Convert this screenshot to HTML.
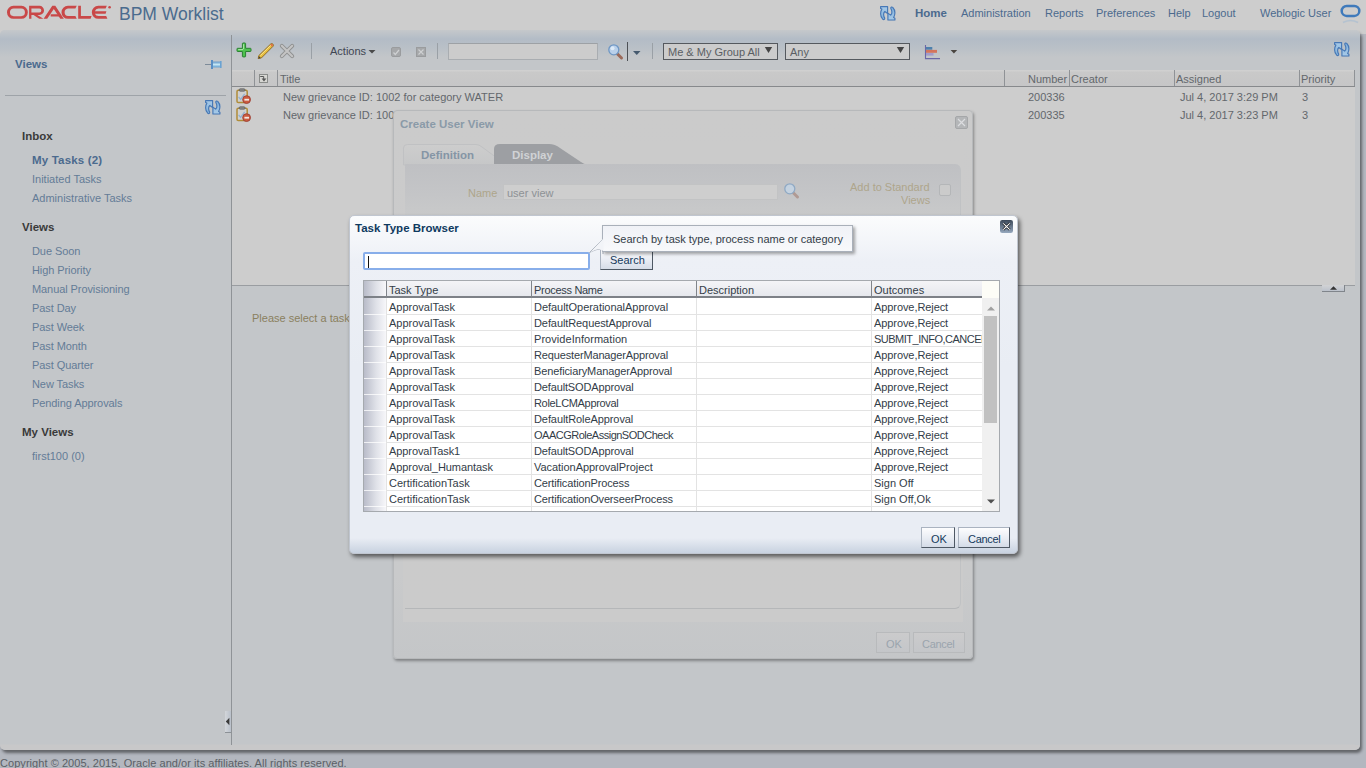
<!DOCTYPE html>
<html><head><meta charset="utf-8">
<style>
*{box-sizing:border-box;margin:0;padding:0}
html,body{width:1366px;height:768px;overflow:hidden}
body{position:relative;font-family:"Liberation Sans",sans-serif;font-size:11px;background:#b3b7bf;color:#444}
.a{position:absolute;white-space:nowrap;line-height:13px}
svg{position:absolute;overflow:visible}
</style></head><body>
<div class="a" style="left:0px;top:0px;width:1366px;height:34px;background:#cdcdcd"></div>
<svg style="left:0;top:0" width="120" height="30" viewBox="0 0 120 30"><g fill="#c94848">
<path fill-rule="evenodd" d="M13.45 5.85H21.35A6.475 6.475 0 0 1 21.35 18.8H13.45A6.475 6.475 0 0 1 13.45 5.85ZM13.8 8.5A3.85 3.85 0 0 0 13.8 16.2H21.1A3.85 3.85 0 0 0 21.1 8.5Z"/>
<path d="M29.1 5.85H39.5A4.525 4.525 0 0 1 39.5 14.9H31.4V18.8H29.1ZM31.4 8.4V12.5H39.3A2.05 2.05 0 0 0 39.3 8.4Z"/>
<path d="M33.6 14.9H37.4L43.4 18.8H39.2Z"/>
<path d="M43.6 18.8L52.3 5.85H55.3L63.8 18.8H60.3L53.8 9.1L47.2 18.8Z"/>
<path d="M50.7 14.2H58.2L59.8 16.6H50.7Z"/>
<path d="M76.7 5.85H67.95A6.475 6.475 0 0 0 67.95 18.8H76.7L75.4 16.1H68A3.825 3.825 0 0 1 68 8.5H75.4Z"/>
<path d="M78.2 5.85H80.9V16.1H91.6L90.6 18.8H78.2Z"/>
<path d="M106.8 5.85H98.3A6.475 6.475 0 0 0 98.3 18.8H107.4L106.2 16.1H98.4A3.825 3.825 0 0 1 94.9 13.8H105.6L106.4 11.2H94.9A3.825 3.825 0 0 1 98.4 8.5H105.6Z"/>
<circle cx="109.6" cy="7.2" r="1.3"/>
</g></svg>
<div class="a" style="left:119px;top:8px;font-size:17.5px;color:#4a6b8e;">BPM Worklist</div>
<svg style="left:880px;top:6px" width="17" height="17" viewBox="0 0 17 17">
<defs><linearGradient id="rg880" x1="0" y1="0" x2="0" y2="1"><stop offset="0" stop-color="#a9cbe8"/><stop offset="1" stop-color="#7fb0db"/></linearGradient></defs>
<g transform="translate(0.3 0.3)" fill="#7d8a96" opacity=".35"><path d="M0.6 0.6H7.6V7.5L4.8 5.5Q3.5 6.7 3.6 8.6Q3.7 10.6 4.7 12.1Q4.9 13.2 4.1 13.5Q3.3 13.8 2.7 13.1Q0.6 11 0.6 7.8Q0.6 5 1.9 3.1L0.6 2.4Z"/><path d="M0.6 0.6H7.6V7.5L4.8 5.5Q3.5 6.7 3.6 8.6Q3.7 10.6 4.7 12.1Q4.9 13.2 4.1 13.5Q3.3 13.8 2.7 13.1Q0.6 11 0.6 7.8Q0.6 5 1.9 3.1L0.6 2.4Z" transform="rotate(180 7.75 7.3)"/></g>
<g fill="url(#rg880)" stroke="#4778b6" stroke-width="1.15" stroke-linejoin="round"><path d="M0.6 0.6H7.6V7.5L4.8 5.5Q3.5 6.7 3.6 8.6Q3.7 10.6 4.7 12.1Q4.9 13.2 4.1 13.5Q3.3 13.8 2.7 13.1Q0.6 11 0.6 7.8Q0.6 5 1.9 3.1L0.6 2.4Z"/><path d="M0.6 0.6H7.6V7.5L4.8 5.5Q3.5 6.7 3.6 8.6Q3.7 10.6 4.7 12.1Q4.9 13.2 4.1 13.5Q3.3 13.8 2.7 13.1Q0.6 11 0.6 7.8Q0.6 5 1.9 3.1L0.6 2.4Z" transform="rotate(180 7.75 7.3)"/></g>
</svg>
<div class="a" style="left:915px;top:7px;font-size:11.5px;color:#4b6a8e;font-weight:bold;">Home</div>
<div class="a" style="left:961px;top:7px;font-size:11px;color:#4b6a8e;">Administration</div>
<div class="a" style="left:1045px;top:7px;font-size:11px;color:#4b6a8e;">Reports</div>
<div class="a" style="left:1096px;top:7px;font-size:11px;color:#4b6a8e;">Preferences</div>
<div class="a" style="left:1168px;top:7px;font-size:11px;color:#4b6a8e;">Help</div>
<div class="a" style="left:1202px;top:7px;font-size:11px;color:#4b6a8e;">Logout</div>
<div class="a" style="left:1260px;top:7px;font-size:11px;color:#4b6a8e;">Weblogic User</div>
<svg style="left:1338px;top:3px" width="26" height="22" viewBox="0 0 26 22">
<rect x="3.7" y="2.9" width="17.6" height="10" rx="5" fill="none" stroke="#3f7abb" stroke-width="2.5"/>
<path d="M5 19.5Q12.5 15.5 20 19.5" fill="none" stroke="#a9bdd2" stroke-width="1.5" opacity=".7"/>
</svg>
<div class="a" style="left:0px;top:30px;width:1360px;height:720px;background:linear-gradient(#c3c6c9 714px,#c8c8c9 715px);border-radius:5px;box-shadow:2px 3px 3px rgba(0,0,0,.45)"></div>
<div class="a" style="left:0px;top:30px;width:1360px;height:32px;border-radius:5px 5px 0 0;background:linear-gradient(#c5c8cb,#b3bcc6 28%,#b9c0c7 55%,#c3c6c9 85%)"></div>
<div class="a" style="left:15px;top:58px;font-size:11.5px;color:#4b6a8e;font-weight:bold;">Views</div>
<svg style="left:204px;top:58px" width="20" height="14" viewBox="0 0 20 14">
<defs><linearGradient id="pg" x1="0" y1="0" x2="0" y2="1"><stop offset="0" stop-color="#5d93c6"/><stop offset=".5" stop-color="#c4e6f4"/><stop offset="1" stop-color="#5c9bcf"/></linearGradient></defs>
<line x1="1" y1="6.5" x2="7.5" y2="6.5" stroke="#7d8b99" stroke-width="1"/>
<rect x="7" y="2" width="2" height="9" fill="#5a8fc4"/>
<rect x="9" y="3.6" width="7.5" height="5.8" fill="url(#pg)"/>
<rect x="16" y="3" width="1.6" height="7" fill="#6aa3d2"/>
</svg>
<div class="a" style="left:5px;top:95px;width:221px;height:1px;background:#9ea3a8"></div>
<svg style="left:205px;top:100px" width="17" height="17" viewBox="0 0 17 17">
<defs><linearGradient id="rg205" x1="0" y1="0" x2="0" y2="1"><stop offset="0" stop-color="#a9cbe8"/><stop offset="1" stop-color="#7fb0db"/></linearGradient></defs>
<g transform="translate(0.3 0.3)" fill="#7d8a96" opacity=".35"><path d="M0.6 0.6H7.6V7.5L4.8 5.5Q3.5 6.7 3.6 8.6Q3.7 10.6 4.7 12.1Q4.9 13.2 4.1 13.5Q3.3 13.8 2.7 13.1Q0.6 11 0.6 7.8Q0.6 5 1.9 3.1L0.6 2.4Z"/><path d="M0.6 0.6H7.6V7.5L4.8 5.5Q3.5 6.7 3.6 8.6Q3.7 10.6 4.7 12.1Q4.9 13.2 4.1 13.5Q3.3 13.8 2.7 13.1Q0.6 11 0.6 7.8Q0.6 5 1.9 3.1L0.6 2.4Z" transform="rotate(180 7.75 7.3)"/></g>
<g fill="url(#rg205)" stroke="#4778b6" stroke-width="1.15" stroke-linejoin="round"><path d="M0.6 0.6H7.6V7.5L4.8 5.5Q3.5 6.7 3.6 8.6Q3.7 10.6 4.7 12.1Q4.9 13.2 4.1 13.5Q3.3 13.8 2.7 13.1Q0.6 11 0.6 7.8Q0.6 5 1.9 3.1L0.6 2.4Z"/><path d="M0.6 0.6H7.6V7.5L4.8 5.5Q3.5 6.7 3.6 8.6Q3.7 10.6 4.7 12.1Q4.9 13.2 4.1 13.5Q3.3 13.8 2.7 13.1Q0.6 11 0.6 7.8Q0.6 5 1.9 3.1L0.6 2.4Z" transform="rotate(180 7.75 7.3)"/></g>
</svg>
<div class="a" style="left:22px;top:130px;font-size:11.5px;color:#3a3a3a;font-weight:bold;">Inbox</div>
<div class="a" style="left:32px;top:154px;font-size:11.5px;color:#4b6a8e;font-weight:bold;letter-spacing:0.18px;">My Tasks (2)</div>
<div class="a" style="left:32px;top:173px;font-size:11px;color:#647c97;">Initiated Tasks</div>
<div class="a" style="left:32px;top:192px;font-size:11px;color:#647c97;">Administrative Tasks</div>
<div class="a" style="left:22px;top:221px;font-size:11.5px;color:#3a3a3a;font-weight:bold;">Views</div>
<div class="a" style="left:32px;top:245px;font-size:11px;color:#647c97;letter-spacing:-0.08px;">Due Soon</div>
<div class="a" style="left:32px;top:264px;font-size:11px;color:#647c97;letter-spacing:-0.08px;">High Priority</div>
<div class="a" style="left:32px;top:283px;font-size:11px;color:#647c97;letter-spacing:-0.08px;">Manual Provisioning</div>
<div class="a" style="left:32px;top:302px;font-size:11px;color:#647c97;letter-spacing:-0.08px;">Past Day</div>
<div class="a" style="left:32px;top:321px;font-size:11px;color:#647c97;letter-spacing:-0.08px;">Past Week</div>
<div class="a" style="left:32px;top:340px;font-size:11px;color:#647c97;letter-spacing:-0.08px;">Past Month</div>
<div class="a" style="left:32px;top:359px;font-size:11px;color:#647c97;letter-spacing:-0.08px;">Past Quarter</div>
<div class="a" style="left:32px;top:378px;font-size:11px;color:#647c97;letter-spacing:-0.08px;">New Tasks</div>
<div class="a" style="left:32px;top:397px;font-size:11px;color:#647c97;letter-spacing:-0.08px;">Pending Approvals</div>
<div class="a" style="left:22px;top:426px;font-size:11.5px;color:#3a3a3a;font-weight:bold;">My Views</div>
<div class="a" style="left:32px;top:450px;font-size:11px;color:#647c97;">first100 (0)</div>
<div class="a" style="left:231px;top:35px;width:1px;height:710px;background:#8f9397"></div>
<div class="a" style="left:225px;top:711px;width:6px;height:22px;background:linear-gradient(90deg,#d3d6da,#b9c0ca);border-bottom:1px solid #8c9196"></div>
<svg style="left:225px;top:716px" width="6" height="12"><path d="M0.8 5.5L4.4 1.8V9.2Z" fill="#3a3a3a"/></svg>
<svg style="left:236px;top:42px" width="17" height="17" viewBox="0 0 17 17">
<path d="M6.4 1.6Q6.4 1 7 1H9Q9.6 1 9.6 1.6V6.3H14.4Q15 6.3 15 6.9V8.9Q15 9.5 14.4 9.5H9.6V14.3Q9.6 14.9 9 14.9H7Q6.4 14.9 6.4 14.3V9.5H1.6Q1 9.5 1 8.9V6.9Q1 6.3 1.6 6.3H6.4Z" fill="#4ec24e" stroke="#2c8034" stroke-width="1"/>
<path d="M7.6 2.2V7.2M2.2 7.6H7" stroke="#c8f0c4" stroke-width="1" opacity=".8"/>
</svg>
<svg style="left:257px;top:42px" width="18" height="18" viewBox="0 0 18 18">
<path d="M1.8 13.6L1.2 16.6 4.3 16 16 4.3Q16.9 3.2 15.9 2.1Q14.8 1.1 13.7 2Z" fill="#e8c040" stroke="#8d6a28" stroke-width="1" stroke-linejoin="round"/>
<path d="M13.2 3.1L14.8 4.7L15.6 3.8Q16.4 3 15.6 2.2Q14.8 1.4 14 2.3Z" fill="#e0704a"/>
<path d="M3.3 13.6L13.6 3.3" stroke="#fff3b0" stroke-width=".7"/>
<path d="M1.5 16.4L2.2 14.2 3.7 15.7Z" fill="#404040"/>
</svg>
<svg style="left:279px;top:43px" width="16" height="16" viewBox="0 0 16 16">
<path d="M2.8 2.8L13.2 13.2M13.2 2.8L2.8 13.2" stroke="#8f9090" stroke-width="4" stroke-linecap="round"/>
<path d="M2.8 2.8L13.2 13.2M13.2 2.8L2.8 13.2" stroke="#c4c4c4" stroke-width="2.1" stroke-linecap="round"/>
</svg>
<div class="a" style="left:311px;top:43px;width:1px;height:16px;background:#9aa0a6"></div>
<div class="a" style="left:330px;top:45px;font-size:11px;color:#3f4652;">Actions</div>
<svg style="left:368px;top:49px" width="8" height="6"><path d="M0.5 1H7.5L4 4.5Z" fill="#4a4a4a"/></svg>
<div class="a" style="left:391px;top:47px;width:10px;height:10px;background:#a6a8aa;border:1px solid #9a9c9e;border-radius:2px"></div>
<svg style="left:391px;top:47px" width="10" height="10"><path d="M2.5 5.5L4.3 7.5 8 3" stroke="#cfd1d3" stroke-width="1.2" fill="none"/></svg>
<div class="a" style="left:416px;top:47px;width:10px;height:10px;background:#a6a8aa;border:1px solid #9a9c9e"></div>
<svg style="left:416px;top:47px" width="10" height="10"><path d="M2.5 2.5L7.5 7.5M7.5 2.5L2.5 7.5" stroke="#cfd1d3" stroke-width="1.1"/></svg>
<div class="a" style="left:437px;top:43px;width:1px;height:16px;background:#9aa0a6"></div>
<div class="a" style="left:448px;top:43px;width:150px;height:17px;background:#cccccc;border:1px solid #a9adb1;border-top-color:#9da1a5"></div>
<svg style="left:607px;top:43px" width="18" height="18" viewBox="0 0 18 18">
<path d="M9.5 10L14.5 15" stroke="#9a6a5a" stroke-width="3" stroke-linecap="round"/>
<circle cx="6.8" cy="6.8" r="5" fill="#b9d0ea" stroke="#6f97c4" stroke-width="1.3"/>
<circle cx="5.5" cy="5.3" r="2" fill="#e6f0fa" opacity=".8"/>
</svg>
<div class="a" style="left:627px;top:42px;width:1px;height:19px;background:#4d5156"></div>
<svg style="left:632px;top:50px" width="10" height="6"><path d="M1 1H8.5L4.75 5Z" fill="#465a6e"/></svg>
<div class="a" style="left:652px;top:43px;width:1px;height:16px;background:#9aa0a6"></div>
<div class="a" style="left:663px;top:43px;width:115px;height:17px;background:#cccccc;border:1px solid #55595e"></div>
<div class="a" style="left:668px;top:46px;font-size:11px;color:#5a5e63;">Me &amp; My Group All</div>
<svg style="left:764px;top:46px" width="9" height="8"><path d="M0.8 1H8.2L4.5 7Z" fill="#444"/></svg>
<div class="a" style="left:785px;top:43px;width:125px;height:17px;background:#cccccc;border:1px solid #55595e"></div>
<div class="a" style="left:790px;top:46px;font-size:11px;color:#5a5e63;">Any</div>
<svg style="left:896px;top:46px" width="9" height="8"><path d="M0.8 1H8.2L4.5 7Z" fill="#444"/></svg>
<svg style="left:924px;top:44px" width="18" height="17" viewBox="0 0 18 17">
<rect x="2" y="3" width="6.3" height="2.7" fill="#4d80ad"/>
<rect x="2" y="5.9" width="11" height="2.9" fill="#d4745c"/>
<rect x="2" y="9" width="7.5" height="2.6" fill="#a29ccc"/>
<path d="M1.5 1V14.6H16" stroke="#6a67a6" stroke-width="1.1" fill="none"/>
</svg>
<svg style="left:950px;top:49px" width="8" height="6"><path d="M0.6 1H7.2L3.9 4.6Z" fill="#4a4540"/></svg>
<svg style="left:1334px;top:42px" width="17" height="17" viewBox="0 0 17 17">
<defs><linearGradient id="rg1334" x1="0" y1="0" x2="0" y2="1"><stop offset="0" stop-color="#a9cbe8"/><stop offset="1" stop-color="#7fb0db"/></linearGradient></defs>
<g transform="translate(0.3 0.3)" fill="#7d8a96" opacity=".35"><path d="M0.6 0.6H7.6V7.5L4.8 5.5Q3.5 6.7 3.6 8.6Q3.7 10.6 4.7 12.1Q4.9 13.2 4.1 13.5Q3.3 13.8 2.7 13.1Q0.6 11 0.6 7.8Q0.6 5 1.9 3.1L0.6 2.4Z"/><path d="M0.6 0.6H7.6V7.5L4.8 5.5Q3.5 6.7 3.6 8.6Q3.7 10.6 4.7 12.1Q4.9 13.2 4.1 13.5Q3.3 13.8 2.7 13.1Q0.6 11 0.6 7.8Q0.6 5 1.9 3.1L0.6 2.4Z" transform="rotate(180 7.75 7.3)"/></g>
<g fill="url(#rg1334)" stroke="#4778b6" stroke-width="1.15" stroke-linejoin="round"><path d="M0.6 0.6H7.6V7.5L4.8 5.5Q3.5 6.7 3.6 8.6Q3.7 10.6 4.7 12.1Q4.9 13.2 4.1 13.5Q3.3 13.8 2.7 13.1Q0.6 11 0.6 7.8Q0.6 5 1.9 3.1L0.6 2.4Z"/><path d="M0.6 0.6H7.6V7.5L4.8 5.5Q3.5 6.7 3.6 8.6Q3.7 10.6 4.7 12.1Q4.9 13.2 4.1 13.5Q3.3 13.8 2.7 13.1Q0.6 11 0.6 7.8Q0.6 5 1.9 3.1L0.6 2.4Z" transform="rotate(180 7.75 7.3)"/></g>
</svg>
<div class="a" style="left:232px;top:70px;width:1123px;height:215px;background:#cdcdcd"></div>
<div class="a" style="left:232px;top:70px;width:1123px;height:17px;background:linear-gradient(#d0d0d0 1px,#c9c9c9 2px,#c6c6c7);border-bottom:1px solid #87898c"></div>
<div class="a" style="left:254px;top:70px;width:1px;height:16px;background:#8f9296"></div>
<div class="a" style="left:277px;top:70px;width:1px;height:16px;background:#8f9296"></div>
<div class="a" style="left:1004px;top:70px;width:1px;height:16px;background:#8f9296"></div>
<div class="a" style="left:1069px;top:70px;width:1px;height:16px;background:#8f9296"></div>
<div class="a" style="left:1174px;top:70px;width:1px;height:16px;background:#8f9296"></div>
<div class="a" style="left:1299px;top:70px;width:1px;height:16px;background:#8f9296"></div>
<div class="a" style="left:1354px;top:70px;width:1px;height:16px;background:#8f9296"></div>
<svg style="left:259px;top:74px" width="9" height="9" viewBox="0 0 9 9">
<rect x="0.5" y="0.5" width="8" height="8" fill="#d6d6d2" stroke="#8a8c8a" stroke-width="1"/>
<path d="M1.2 2.5H4.7V5" stroke="#555" stroke-width="1" fill="none"/>
<path d="M2.6 4.6H7.4L5 7.4Z" fill="#555"/>
</svg>
<div class="a" style="left:280px;top:73px;font-size:11px;color:#63676c;">Title</div>
<div class="a" style="left:1028px;top:73px;font-size:11px;color:#63676c;">Number</div>
<div class="a" style="left:1071px;top:73px;font-size:11px;color:#63676c;">Creator</div>
<div class="a" style="left:1176px;top:73px;font-size:11px;color:#63676c;">Assigned</div>
<div class="a" style="left:1301px;top:73px;font-size:11px;color:#63676c;">Priority</div>
<svg style="left:234px;top:88px" width="18" height="18" viewBox="0 0 18 18">
<rect x="3" y="2.2" width="10.2" height="12.3" rx="1.3" fill="#d0d0d0" stroke="#b08c38" stroke-width="1.5"/>
<rect x="5.2" y="0.8" width="5.8" height="2.4" rx="1" fill="#8a8a8a" stroke="#5a5a5a" stroke-width=".7"/>
<path d="M4.6 8.8L6.6 11.4 10.6 5.8" stroke="#8fb2d4" stroke-width="1.2" fill="none"/>
<circle cx="12.6" cy="11.6" r="3.9" fill="#cc5b3f" stroke="#9b3f35" stroke-width=".9"/>
<rect x="10.4" y="10.8" width="4.6" height="1.8" fill="#f2e6e2"/>
</svg>
<svg style="left:234px;top:106px" width="18" height="18" viewBox="0 0 18 18">
<rect x="3" y="2.2" width="10.2" height="12.3" rx="1.3" fill="#d0d0d0" stroke="#b08c38" stroke-width="1.5"/>
<rect x="5.2" y="0.8" width="5.8" height="2.4" rx="1" fill="#8a8a8a" stroke="#5a5a5a" stroke-width=".7"/>
<path d="M4.6 8.8L6.6 11.4 10.6 5.8" stroke="#8fb2d4" stroke-width="1.2" fill="none"/>
<circle cx="12.6" cy="11.6" r="3.9" fill="#cc5b3f" stroke="#9b3f35" stroke-width=".9"/>
<rect x="10.4" y="10.8" width="4.6" height="1.8" fill="#f2e6e2"/>
</svg>
<div class="a" style="left:283px;top:91px;font-size:11px;color:#63676c;">New grievance ID: 1002 for category WATER</div>
<div class="a" style="left:283px;top:109px;font-size:11px;color:#63676c;">New grievance ID: 1002 for category WATER</div>
<div class="a" style="left:1028px;top:91px;font-size:11px;color:#63676c;">200336</div>
<div class="a" style="left:1028px;top:109px;font-size:11px;color:#63676c;">200335</div>
<div class="a" style="left:1180px;top:91px;font-size:11px;color:#63676c;">Jul 4, 2017 3:29 PM</div>
<div class="a" style="left:1180px;top:109px;font-size:11px;color:#63676c;">Jul 4, 2017 3:23 PM</div>
<div class="a" style="left:1302px;top:91px;font-size:11px;color:#63676c;">3</div>
<div class="a" style="left:1302px;top:109px;font-size:11px;color:#63676c;">3</div>
<div class="a" style="left:1355px;top:62px;width:5px;height:683px;background:#c3c6c9"></div>
<div class="a" style="left:232px;top:285px;width:1123px;height:1px;background:#9a9da1"></div>
<div class="a" style="left:1322px;top:285px;width:23px;height:7px;background:linear-gradient(#d2d3d5,#bcc2cc);border-right:1px solid #80858b;border-bottom:1px solid #80858b"></div>
<svg style="left:1329px;top:285px" width="10" height="6"><path d="M1 4.8H8L4.5 1.2Z" fill="#333"/></svg>
<div class="a" style="left:252px;top:312px;font-size:11px;color:#8a805e;">Please select a task</div>
<div class="a" style="left:0px;top:757px;font-size:11px;color:#5b6066;letter-spacing:0.05px;">Copyright © 2005, 2015, Oracle and/or its affiliates. All rights reserved.</div>
<div class="a" style="left:393px;top:110px;width:580px;height:549px;background:linear-gradient(#cbcbcb,#c9cacb 85%,#c4c6c8);border:1px solid #b7b9bb;border-radius:4px;box-shadow:1px 2px 3px rgba(0,0,0,.35)"></div>
<div class="a" style="left:400px;top:118px;font-size:11.5px;color:#8a9aa8;font-weight:bold;">Create User View</div>
<div class="a" style="left:955px;top:116px;width:13px;height:13px;background:#b4b6b8;border:1px solid #a5a7a9;border-radius:2px"></div>
<svg style="left:955px;top:116px" width="13" height="13"><path d="M3 3L10 10M10 3L3 10" stroke="#dcdde0" stroke-width="1.2"/></svg>
<div class="a" style="left:403px;top:141px;width:560px;height:481px;background:#cbcbcb"></div>
<svg style="left:403px;top:142px" width="200" height="24" viewBox="0 0 200 24">
<defs><linearGradient id="tdef" x1="0" y1="0" x2="0" y2="1"><stop offset="0" stop-color="#cdcdcd"/><stop offset="1" stop-color="#c6c7c8"/></linearGradient></defs>
<path d="M0.5 23V6Q0.5 2.5 4.5 2.5H73Q76 2.5 79 5L98 19Q102 22 108 22.5H100V23Z" fill="url(#tdef)" stroke="#c0c1c3" stroke-width="1"/>
<path d="M91 22.5V7Q91 2 97 2H146Q152 2 157 6L178 20Q181 22 184 22.5Z" fill="#9d9fa3"/>
</svg>
<div class="a" style="left:421px;top:149px;font-size:11.5px;color:#8595a5;font-weight:bold;">Definition</div>
<div class="a" style="left:512px;top:149px;font-size:11.5px;color:#d0d2d5;font-weight:bold;">Display</div>
<div class="a" style="left:405px;top:164px;width:556px;height:445px;background:linear-gradient(#bfc0c3,#c4c5c7 30px,#cacbcb 60px,#cbcbcb);border-radius:0 6px 6px 0;border-bottom:1px solid #b5b7b9;border-right:1px solid #c0c2c4"></div>
<div class="a" style="left:468px;top:187px;font-size:11px;color:#aea58b;">Name</div>
<div class="a" style="left:503px;top:184px;width:275px;height:16px;background:#cecece;border:1px solid #c2c3c4"></div>
<div class="a" style="left:507px;top:187px;font-size:11px;color:#8d9195;">user view</div>
<svg style="left:783px;top:182px" width="18" height="18" viewBox="0 0 18 18">
<path d="M9.5 10L14.5 15" stroke="#b09a94" stroke-width="3" stroke-linecap="round"/>
<circle cx="6.8" cy="6.8" r="5" fill="#c4d2e0" stroke="#8fa9c4" stroke-width="1.3"/>
</svg>
<div class="a" style="left:850px;top:181px;font-size:11px;color:#aea58b;">Add to Standard</div>
<div class="a" style="left:901px;top:194px;font-size:11px;color:#aea58b;">Views</div>
<div class="a" style="left:939px;top:184px;width:12px;height:12px;background:#cbcbcb;border:1px solid #b4b6b8;border-radius:2px"></div>
<div class="a" style="left:876px;top:632px;width:34px;height:21px;background:linear-gradient(#cbcbcc,#c4c6c9);border:1px solid #b8babc"></div>
<div class="a" style="left:886px;top:638px;font-size:11px;color:#9aa4ad;">OK</div>
<div class="a" style="left:913px;top:632px;width:52px;height:21px;background:linear-gradient(#cbcbcc,#c4c6c9);border:1px solid #b8babc"></div>
<div class="a" style="left:922px;top:638px;font-size:11px;color:#9aa4ad;letter-spacing:-0.3px;">Cancel</div>
<div class="a" style="left:349px;top:215px;width:669px;height:339px;border-radius:5px;background:linear-gradient(#fbfcfd,#edf0f6 45px,#e9edf4 150px,#e9edf4 322px,#c8d2e0);box-shadow:2px 3px 4px rgba(0,0,0,.55);border:1px solid #c0c6d0"></div>
<div class="a" style="left:355px;top:222px;font-size:11.5px;color:#0f3a5f;font-weight:bold;">Task Type Browser</div>
<svg style="left:1000px;top:220px" width="13" height="13" viewBox="0 0 13 13">
<defs><linearGradient id="cg" x1="0" y1="0" x2="0" y2="1"><stop offset="0" stop-color="#3b4858"/><stop offset="1" stop-color="#96a8be"/></linearGradient></defs>
<rect x="0" y="0" width="13" height="13" rx="2.2" fill="url(#cg)"/>
<path d="M3.3 3.3L9.7 9.7M9.7 3.3L3.3 9.7" stroke="#000" stroke-width="2.4" opacity=".85"/>
<path d="M3.3 3.3L9.7 9.7M9.7 3.3L3.3 9.7" stroke="#fff" stroke-width="1.1"/>
</svg>
<div class="a" style="left:363px;top:252px;width:227px;height:18px;background:#fff;border:2px solid #88aeea;border-radius:2px"></div>
<div class="a" style="left:368px;top:256px;width:1px;height:12px;background:#111"></div>
<div class="a" style="left:600px;top:249px;width:53px;height:21px;background:linear-gradient(#fdfdfe,#e6eaf2 60%,#d6dde8);border:1px solid #aab3c0;border-right-color:#4e5864;border-bottom-color:#4e5864"></div>
<div class="a" style="left:610px;top:254px;font-size:11px;color:#153a5c;">Search</div>
<svg style="left:586px;top:224px" width="22" height="32" viewBox="0 0 22 32">
<path d="M17 4V15L3.5 28.5 9 26 13 25 17 26V30" fill="#f2f4f8" stroke="#a5adb8" stroke-width="1"/>
</svg>
<div class="a" style="left:602px;top:225px;width:251px;height:27px;background:linear-gradient(#f0f2f7,#f8f9fb);border:1px solid #a9b0ba;box-shadow:2px 2px 3px rgba(0,0,0,.35)"></div>
<svg style="left:586px;top:224px" width="22" height="32" viewBox="0 0 22 32"><path d="M17.5 14V26.5H16L13 25 9 26 4 28.5 17 15Z" fill="#f2f4f8"/></svg>
<div class="a" style="left:613px;top:233px;font-size:11px;color:#333d48;">Search by task type, process name or category</div>
<div class="a" style="left:363px;top:280px;width:637px;height:232px;background:#fff;border:1px solid #a5a9ae"></div>
<div class="a" style="left:364px;top:281px;width:618px;height:17px;background:linear-gradient(#f4f4f7,#e6e8ed);border-bottom:2px solid #7d8187"></div>
<div class="a" style="left:364px;top:281px;width:22px;height:230px;background:linear-gradient(90deg,#b9bcc9,#dfe1e8 55%,#f7f7fa)"></div>
<div class="a" style="left:364px;top:281px;width:22px;height:17px;background:linear-gradient(90deg,#b9bcc9,#dfe1e8 55%,#f7f7fa);border-bottom:2px solid #7d8187"></div>
<div class="a" style="left:386px;top:281px;width:1px;height:17px;background:#80848a"></div>
<div class="a" style="left:386px;top:298px;width:1px;height:213px;background:#e3e3e3"></div>
<div class="a" style="left:531px;top:281px;width:1px;height:17px;background:#80848a"></div>
<div class="a" style="left:531px;top:298px;width:1px;height:213px;background:#e3e3e3"></div>
<div class="a" style="left:696px;top:281px;width:1px;height:17px;background:#80848a"></div>
<div class="a" style="left:696px;top:298px;width:1px;height:213px;background:#e3e3e3"></div>
<div class="a" style="left:871px;top:281px;width:1px;height:17px;background:#80848a"></div>
<div class="a" style="left:871px;top:298px;width:1px;height:213px;background:#e3e3e3"></div>
<div class="a" style="left:389px;top:284px;font-size:11px;color:#333d48;">Task Type</div>
<div class="a" style="left:534px;top:284px;font-size:11px;color:#333d48;letter-spacing:-0.3px;">Process Name</div>
<div class="a" style="left:699px;top:284px;font-size:11px;color:#333d48;">Description</div>
<div class="a" style="left:874px;top:284px;font-size:11px;color:#333d48;">Outcomes</div>
<div class="a" style="left:387px;top:314px;width:595px;height:1px;background:#e3e3e3"></div>
<div class="a" style="left:364px;top:314px;width:22px;height:1px;background:rgba(255,255,255,.75)"></div>
<div class="a" style="left:387px;top:330px;width:595px;height:1px;background:#e3e3e3"></div>
<div class="a" style="left:364px;top:330px;width:22px;height:1px;background:rgba(255,255,255,.75)"></div>
<div class="a" style="left:387px;top:346px;width:595px;height:1px;background:#e3e3e3"></div>
<div class="a" style="left:364px;top:346px;width:22px;height:1px;background:rgba(255,255,255,.75)"></div>
<div class="a" style="left:387px;top:362px;width:595px;height:1px;background:#e3e3e3"></div>
<div class="a" style="left:364px;top:362px;width:22px;height:1px;background:rgba(255,255,255,.75)"></div>
<div class="a" style="left:387px;top:378px;width:595px;height:1px;background:#e3e3e3"></div>
<div class="a" style="left:364px;top:378px;width:22px;height:1px;background:rgba(255,255,255,.75)"></div>
<div class="a" style="left:387px;top:394px;width:595px;height:1px;background:#e3e3e3"></div>
<div class="a" style="left:364px;top:394px;width:22px;height:1px;background:rgba(255,255,255,.75)"></div>
<div class="a" style="left:387px;top:410px;width:595px;height:1px;background:#e3e3e3"></div>
<div class="a" style="left:364px;top:410px;width:22px;height:1px;background:rgba(255,255,255,.75)"></div>
<div class="a" style="left:387px;top:426px;width:595px;height:1px;background:#e3e3e3"></div>
<div class="a" style="left:364px;top:426px;width:22px;height:1px;background:rgba(255,255,255,.75)"></div>
<div class="a" style="left:387px;top:442px;width:595px;height:1px;background:#e3e3e3"></div>
<div class="a" style="left:364px;top:442px;width:22px;height:1px;background:rgba(255,255,255,.75)"></div>
<div class="a" style="left:387px;top:458px;width:595px;height:1px;background:#e3e3e3"></div>
<div class="a" style="left:364px;top:458px;width:22px;height:1px;background:rgba(255,255,255,.75)"></div>
<div class="a" style="left:387px;top:474px;width:595px;height:1px;background:#e3e3e3"></div>
<div class="a" style="left:364px;top:474px;width:22px;height:1px;background:rgba(255,255,255,.75)"></div>
<div class="a" style="left:387px;top:490px;width:595px;height:1px;background:#e3e3e3"></div>
<div class="a" style="left:364px;top:490px;width:22px;height:1px;background:rgba(255,255,255,.75)"></div>
<div class="a" style="left:387px;top:506px;width:595px;height:1px;background:#e3e3e3"></div>
<div class="a" style="left:364px;top:506px;width:22px;height:1px;background:rgba(255,255,255,.75)"></div>
<div class="a" style="left:364px;top:298px;width:618px;height:213px;overflow:hidden">
<div class="a" style="left:25px;top:3px;color:#333d48;">ApprovalTask</div>
<div class="a" style="left:170px;top:3px;color:#333d48;letter-spacing:-0.04px;">DefaultOperationalApproval</div>
<div class="a" style="left:510px;top:3px;width:108px;overflow:hidden;color:#333d48;letter-spacing:-0.08px;">Approve,Reject</div>
<div class="a" style="left:25px;top:19px;color:#333d48;">ApprovalTask</div>
<div class="a" style="left:170px;top:19px;color:#333d48;letter-spacing:-0.09px;">DefaultRequestApproval</div>
<div class="a" style="left:510px;top:19px;width:108px;overflow:hidden;color:#333d48;letter-spacing:-0.08px;">Approve,Reject</div>
<div class="a" style="left:25px;top:35px;color:#333d48;">ApprovalTask</div>
<div class="a" style="left:170px;top:35px;color:#333d48;letter-spacing:0.05px;">ProvideInformation</div>
<div class="a" style="left:510px;top:35px;width:108px;overflow:hidden;color:#333d48;letter-spacing:-0.5px;">SUBMIT_INFO,CANCEL</div>
<div class="a" style="left:25px;top:51px;color:#333d48;">ApprovalTask</div>
<div class="a" style="left:170px;top:51px;color:#333d48;letter-spacing:-0.15px;">RequesterManagerApproval</div>
<div class="a" style="left:510px;top:51px;width:108px;overflow:hidden;color:#333d48;letter-spacing:-0.08px;">Approve,Reject</div>
<div class="a" style="left:25px;top:67px;color:#333d48;">ApprovalTask</div>
<div class="a" style="left:170px;top:67px;color:#333d48;letter-spacing:-0.12px;">BeneficiaryManagerApproval</div>
<div class="a" style="left:510px;top:67px;width:108px;overflow:hidden;color:#333d48;letter-spacing:-0.08px;">Approve,Reject</div>
<div class="a" style="left:25px;top:83px;color:#333d48;">ApprovalTask</div>
<div class="a" style="left:170px;top:83px;color:#333d48;letter-spacing:-0.14px;">DefaultSODApproval</div>
<div class="a" style="left:510px;top:83px;width:108px;overflow:hidden;color:#333d48;letter-spacing:-0.08px;">Approve,Reject</div>
<div class="a" style="left:25px;top:99px;color:#333d48;">ApprovalTask</div>
<div class="a" style="left:170px;top:99px;color:#333d48;letter-spacing:-0.32px;">RoleLCMApproval</div>
<div class="a" style="left:510px;top:99px;width:108px;overflow:hidden;color:#333d48;letter-spacing:-0.08px;">Approve,Reject</div>
<div class="a" style="left:25px;top:115px;color:#333d48;">ApprovalTask</div>
<div class="a" style="left:170px;top:115px;color:#333d48;letter-spacing:-0.09px;">DefaultRoleApproval</div>
<div class="a" style="left:510px;top:115px;width:108px;overflow:hidden;color:#333d48;letter-spacing:-0.08px;">Approve,Reject</div>
<div class="a" style="left:25px;top:131px;color:#333d48;">ApprovalTask</div>
<div class="a" style="left:170px;top:131px;color:#333d48;letter-spacing:-0.5px;">OAACGRoleAssignSODCheck</div>
<div class="a" style="left:510px;top:131px;width:108px;overflow:hidden;color:#333d48;letter-spacing:-0.08px;">Approve,Reject</div>
<div class="a" style="left:25px;top:147px;color:#333d48;letter-spacing:-0.08px;">ApprovalTask1</div>
<div class="a" style="left:170px;top:147px;color:#333d48;letter-spacing:-0.14px;">DefaultSODApproval</div>
<div class="a" style="left:510px;top:147px;width:108px;overflow:hidden;color:#333d48;letter-spacing:-0.08px;">Approve,Reject</div>
<div class="a" style="left:25px;top:163px;color:#333d48;letter-spacing:-0.07px;">Approval_Humantask</div>
<div class="a" style="left:170px;top:163px;color:#333d48;letter-spacing:-0.04px;">VacationApprovalProject</div>
<div class="a" style="left:510px;top:163px;width:108px;overflow:hidden;color:#333d48;letter-spacing:-0.08px;">Approve,Reject</div>
<div class="a" style="left:25px;top:179px;color:#333d48;">CertificationTask</div>
<div class="a" style="left:170px;top:179px;color:#333d48;letter-spacing:-0.125px;">CertificationProcess</div>
<div class="a" style="left:510px;top:179px;width:108px;overflow:hidden;color:#333d48;">Sign Off</div>
<div class="a" style="left:25px;top:195px;color:#333d48;">CertificationTask</div>
<div class="a" style="left:170px;top:195px;color:#333d48;letter-spacing:-0.15px;">CertificationOverseerProcess</div>
<div class="a" style="left:510px;top:195px;width:108px;overflow:hidden;color:#333d48;">Sign Off,Ok</div>
<div class="a" style="left:25px;top:211px;color:#333d48;">ChallengeTask</div>
<div class="a" style="left:170px;top:211px;color:#333d48;">ValidateCertification</div>
<div class="a" style="left:510px;top:211px;width:108px;overflow:hidden;color:#333d48;">Approve</div>
</div>
<div class="a" style="left:982px;top:281px;width:17px;height:17px;background:#fdfdf7"></div>
<div class="a" style="left:982px;top:298px;width:17px;height:213px;background:#f0f0f0"></div>
<svg style="left:986px;top:304px" width="10" height="8"><path d="M1 6.5H9L5 2.5Z" fill="#a0a0a0"/></svg>
<div class="a" style="left:984px;top:316px;width:13px;height:107px;background:#c1c1c1"></div>
<svg style="left:986px;top:498px" width="10" height="8"><path d="M1 1.5H9L5 5.5Z" fill="#505050"/></svg>
<div class="a" style="left:921px;top:527px;width:34px;height:21px;background:linear-gradient(#fdfdfe,#e8ecf3 55%,#d4dbe7);border:1px solid #aab3c0;border-right-color:#4e5864;border-bottom-color:#4e5864"></div>
<div class="a" style="left:931px;top:533px;font-size:11px;color:#153a5c;">OK</div>
<div class="a" style="left:958px;top:527px;width:52px;height:21px;background:linear-gradient(#fdfdfe,#e8ecf3 55%,#d4dbe7);border:1px solid #aab3c0;border-right-color:#4e5864;border-bottom-color:#4e5864"></div>
<div class="a" style="left:968px;top:533px;font-size:11px;color:#153a5c;letter-spacing:-0.3px;">Cancel</div>
</body></html>
